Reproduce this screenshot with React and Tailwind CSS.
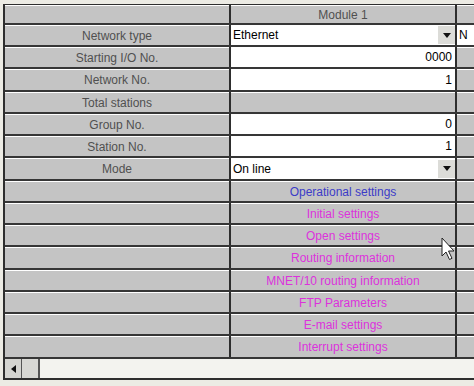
import React from 'react';

const labels = [
  'Network type',
  'Starting I/O No.',
  'Network No.',
  'Total stations',
  'Group No.',
  'Station No.',
  'Mode',
];

const buttons = [
  { text: 'Operational settings', color: 'text-[#3c3cc8]' },
  { text: 'Initial settings', color: 'text-[#dc32dc]' },
  { text: 'Open settings', color: 'text-[#dc32dc]' },
  { text: 'Routing information', color: 'text-[#dc32dc]' },
  { text: 'MNET/10 routing information', color: 'text-[#dc32dc]' },
  { text: 'FTP Parameters', color: 'text-[#dc32dc]' },
  { text: 'E-mail settings', color: 'text-[#dc32dc]' },
  { text: 'Interrupt settings', color: 'text-[#dc32dc]' },
];

const heights = ['h-[22px]', 'h-[22px]', 'h-[23px]', 'h-[22px]', 'h-[22px]', 'h-[22px]', 'h-[23px]', 'h-[22px]',
  'h-[22px]', 'h-[22px]', 'h-[23px]', 'h-[22px]', 'h-[22px]', 'h-[22px]', 'h-[23px]'];

const Arrow = () => (
  <div className="w-[17px] h-[18px] bg-[#dcdcd8] flex items-center justify-center">
    <svg width="8" height="5" viewBox="0 0 8 5"><path d="M0 0h8L4 5z" fill="#111" /></svg>
  </div>
);

const GrayCell = ({ className = '', children }) => (
  <div className={`bg-[#c4c4c4] border-t border-white flex items-center justify-center ${className}`}>
    {children}
  </div>
);

const Row = ({ h, left, mid, third }) => (
  <div className={`flex border-b-2 border-[#363636] ${h}`}>
    <div className="w-[226px] border-r-2 border-[#2e2e2e] flex">{left}</div>
    <div className="w-[226px] border-r-2 border-[#2e2e2e] flex">{mid}</div>
    <div className="flex-1 flex">{third}</div>
  </div>
);

const White = ({ children, align = 'justify-end' }) => (
  <div className={`flex-1 bg-white flex items-center ${align} pr-[3px] text-black`}>{children}</div>
);

export default function App() {
  const values = [
    <div className="flex-1 bg-white flex items-center text-black pl-[2px]">
      <span className="flex-1">Ethernet</span>
      <Arrow />
    </div>,
    <White>0000</White>,
    <White>1</White>,
    <GrayCell className="flex-1" />,
    <White>0</White>,
    <White>1</White>,
    <div className="flex-1 bg-white flex items-center text-black pl-[2px]">
      <span className="flex-1">On line</span>
      <Arrow />
    </div>,
  ];

  return (
    <div className="relative w-[474px] h-[386px] bg-[#ecebe4] pt-[4px] pl-[3px] overflow-hidden font-['Liberation_Sans',sans-serif] text-[12px] leading-none">
      <div className="border-l-2 border-t border-[#2e2e2e] border-b-2 bg-[#f3f3ef]">
        <Row
          h="h-[20px]"
          left={<GrayCell className="flex-1" />}
          mid={<GrayCell className="flex-1 text-[#505050]">Module 1</GrayCell>}
          third={<GrayCell className="flex-1" />}
        />
        {labels.map((l, i) => (
          <Row
            key={l}
            h={heights[i]}
            left={<GrayCell className="flex-1 text-[#505050]">{l}</GrayCell>}
            mid={values[i]}
            third={
              i === 0 ? (
                <div className="flex-1 bg-white text-black flex items-center pl-[2px]">N</div>
              ) : (
                <GrayCell className="flex-1" />
              )
            }
          />
        ))}
        {buttons.map((b, i) => (
          <Row
            key={b.text}
            h={heights[i + 7]}
            left={<GrayCell className="flex-1" />}
            mid={<GrayCell className={`flex-1 ${b.color}`}>{b.text}</GrayCell>}
            third={<GrayCell className="flex-1" />}
          />
        ))}
        <div className="flex h-[19px]">
          <div className="w-[17px] bg-[#d4d4d0] border-r border-[#555] flex items-center justify-center">
            <svg width="5" height="8" viewBox="0 0 5 8"><path d="M5 0v8L0 4z" fill="#111" /></svg>
          </div>
          <div className="w-[18px] bg-[#d8d8d4] border-r-2 border-[#555]" />
          <div className="flex-1" />
        </div>
      </div>
      <svg className="absolute left-[441px] top-[237px]" width="14" height="24" viewBox="0 0 14 24">
        <path d="M1 1v18l4-4 3.5 7.5 2.5-1.2L7.5 14H13z" fill="#fff" stroke="#222" strokeWidth="1" strokeLinejoin="round" />
      </svg>
    </div>
  );
}
